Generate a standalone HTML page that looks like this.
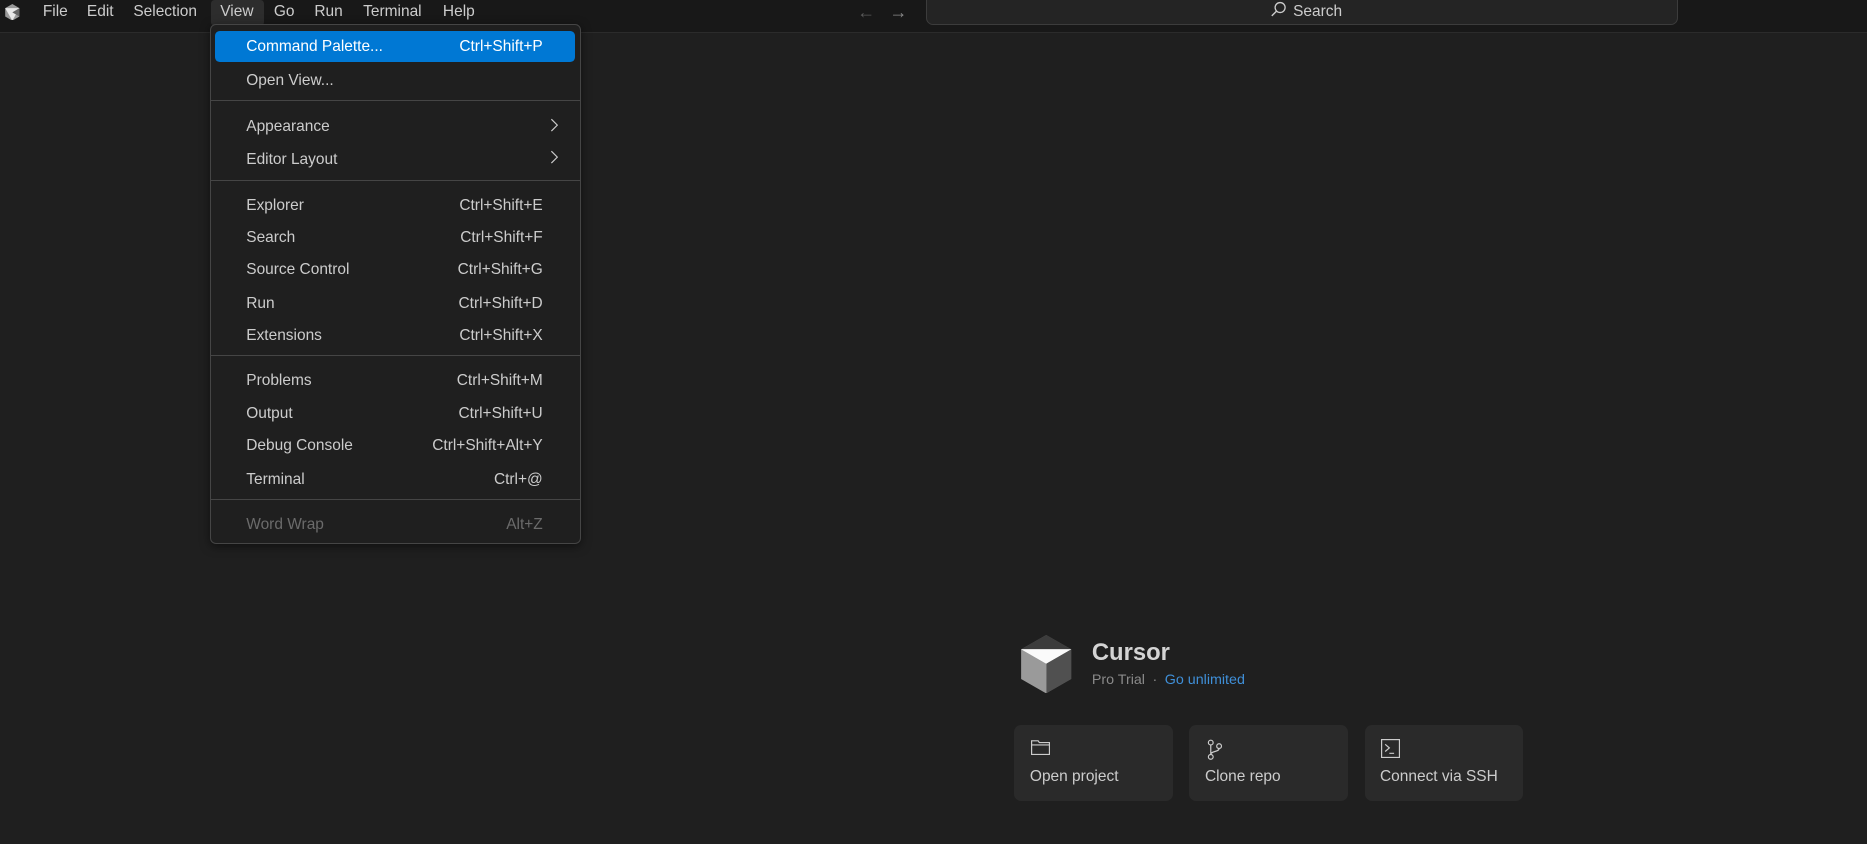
<!DOCTYPE html>
<html><head><meta charset="utf-8"><style>
html,body{margin:0;padding:0;width:1867px;height:844px;overflow:hidden;background:#1f1f1f;}
#w{zoom:1.19069;position:relative;width:1568px;height:709px;font-family:"Segoe UI","Liberation Sans",sans-serif;color:#cccccc;font-size:13px;}
.tb{position:absolute;left:0;top:0;width:1568px;height:27px;background:#181818;border-bottom:1px solid #2b2b2b;}
.mi{position:absolute;top:1px;height:20px;line-height:19px;font-size:13px;color:#cccccc;}
.menu{position:absolute;left:176px;top:20px;width:310px;height:435px;background:#1f1f1f;border:1px solid #454545;border-radius:5px;box-shadow:0 2px 8px rgba(0,0,0,.5);}
.it{position:absolute;left:4px;width:302px;height:26px;line-height:30px;}
.it .l{position:absolute;left:26px;}
.it .r{position:absolute;right:27px;}
.sep{position:absolute;left:0;width:310px;height:1px;background:#454545;}
.card{position:absolute;top:609px;width:133px;height:64px;background:#2a2a2a;border-radius:6px;}
.card svg{position:absolute;left:14px;top:12px;}
.card span{position:absolute;left:13px;top:36px;font-size:13px;color:#cccccc;}
</style></head><body><div id="w">
<div class="tb"></div>
<svg style="position:absolute;left:3px;top:3px" width="14" height="14" viewBox="0 0 14 14"><path d="M7 0L13 3.5V10.5L7 14L1 10.5V3.5Z" fill="#9a9a9a"/><path d="M1 3.5H13L7 14Z" fill="#e8e8e8"/><path d="M7 7L13 3.5V10.5Z" fill="#666"/></svg>
<div class="mi" style="left:36px">File</div>
<div class="mi" style="left:73px">Edit</div>
<div class="mi" style="left:112px">Selection</div>
<div style="position:absolute;left:177px;top:0;width:45px;height:22px;background:#2d2d2d;border-radius:3px"></div>
<div class="mi" style="left:185px">View</div>
<div class="mi" style="left:230px">Go</div>
<div class="mi" style="left:264px">Run</div>
<div class="mi" style="left:305px">Terminal</div>
<div class="mi" style="left:372px">Help</div>
<div class="mi" style="left:720px;color:#5a5a5a;font-size:15px">←</div>
<div class="mi" style="left:747px;color:#8a8a8a;font-size:15px">→</div>
<div style="position:absolute;left:778px;top:-6px;width:630px;height:25px;background:#242424;border:1px solid #3c3c3c;border-radius:6px"></div>
<svg style="position:absolute;left:1067px;top:1px" width="14" height="14" viewBox="0 0 14 14"><circle cx="8.5" cy="5.5" r="4.2" fill="none" stroke="#cccccc" stroke-width="1.1"/><path d="M5.5 8.5L1.5 12.5" stroke="#cccccc" stroke-width="1.2"/></svg>
<div class="mi" style="left:1086px">Search</div>

<div class="menu">
<div class="it" style="top:5px;background:#0078d4;border-radius:4px;color:#fff;line-height:27px"><span class="l">Command Palette...</span><span class="r">Ctrl+Shift+P</span></div>
<div class="it" style="top:32px"><span class="l">Open View...</span></div>
<div class="sep" style="top:63px"></div>
<div class="it" style="top:71px"><span class="l">Appearance</span></div>
<svg style="position:absolute;left:284px;top:78px" width="8" height="12" viewBox="0 0 8 12"><path d="M2 1L7 6L2 11" fill="none" stroke="#ccc" stroke-width="1"/></svg>
<div class="it" style="top:98px"><span class="l">Editor Layout</span></div>
<svg style="position:absolute;left:284px;top:105px" width="8" height="12" viewBox="0 0 8 12"><path d="M2 1L7 6L2 11" fill="none" stroke="#ccc" stroke-width="1"/></svg>
<div class="sep" style="top:130px"></div>
<div class="it" style="top:137px"><span class="l">Explorer</span><span class="r">Ctrl+Shift+E</span></div>
<div class="it" style="top:164px"><span class="l">Search</span><span class="r">Ctrl+Shift+F</span></div>
<div class="it" style="top:191px"><span class="l">Source Control</span><span class="r">Ctrl+Shift+G</span></div>
<div class="it" style="top:219px"><span class="l">Run</span><span class="r">Ctrl+Shift+D</span></div>
<div class="it" style="top:246px"><span class="l">Extensions</span><span class="r">Ctrl+Shift+X</span></div>
<div class="sep" style="top:277px"></div>
<div class="it" style="top:284px"><span class="l">Problems</span><span class="r">Ctrl+Shift+M</span></div>
<div class="it" style="top:312px"><span class="l">Output</span><span class="r">Ctrl+Shift+U</span></div>
<div class="it" style="top:339px"><span class="l">Debug Console</span><span class="r">Ctrl+Shift+Alt+Y</span></div>
<div class="it" style="top:367px"><span class="l">Terminal</span><span class="r">Ctrl+@</span></div>
<div class="sep" style="top:398px"></div>
<div class="it" style="top:405px;color:#6b6b6b"><span class="l">Word Wrap</span><span class="r">Alt+Z</span></div>
</div>

<svg style="position:absolute;left:857px;top:533px" width="44" height="49" viewBox="0 0 44 49"><path d="M22 0L43 12V37L22 49L1 37V12Z" fill="#6a6a6a"/><path d="M1 12L22 0L43 12L22 24Z" fill="#3c3c3c"/><path d="M1 12H43L22 49Z" fill="#f2f2f2"/><path d="M22 24L43 12L43 37L22 49Z" fill="#505050"/><path d="M1 12L22 24L22 49L1 37Z" fill="#9a9a9a"/><path d="M1 12H43L22 24Z" fill="#fafafa"/></svg>
<div style="position:absolute;left:917px;top:537px;font-size:20px;font-weight:bold;color:#d4d4d4">Cursor</div>
<div style="position:absolute;left:917px;top:564px;font-size:12px;color:#8a8a8a">Pro Trial <span style="margin:0 3px">·</span> <span style="color:#3f8fd8">Go unlimited</span></div>

<div class="card" style="left:852px"><svg width="16" height="14" viewBox="0 0 16 14"><path d="M0.5 1.5H6L7 3H15.5V13H0.5Z M0.5 5H15.5" fill="none" stroke="#cccccc" stroke-width="1"/></svg><span>Open project</span></div>
<div class="card" style="left:999px"><svg width="16" height="18" viewBox="0 0 16 18"><circle cx="4" cy="3" r="2" fill="none" stroke="#ccc"/><circle cx="4" cy="15" r="2" fill="none" stroke="#ccc"/><circle cx="11" cy="6" r="2" fill="none" stroke="#ccc"/><path d="M4 5V13M11 8C11 11 4 10 4 13" fill="none" stroke="#ccc"/></svg><span>Clone repo</span></div>
<div class="card" style="left:1146px"><svg width="16" height="16" viewBox="0 0 16 16"><rect x="0.5" y="0.5" width="15" height="15" fill="none" stroke="#ccc"/><path d="M3.5 4.5L7 7.5L3.5 10.5M7 12H11" fill="none" stroke="#ccc"/></svg><span>Connect via SSH</span></div>
</div></body></html>
